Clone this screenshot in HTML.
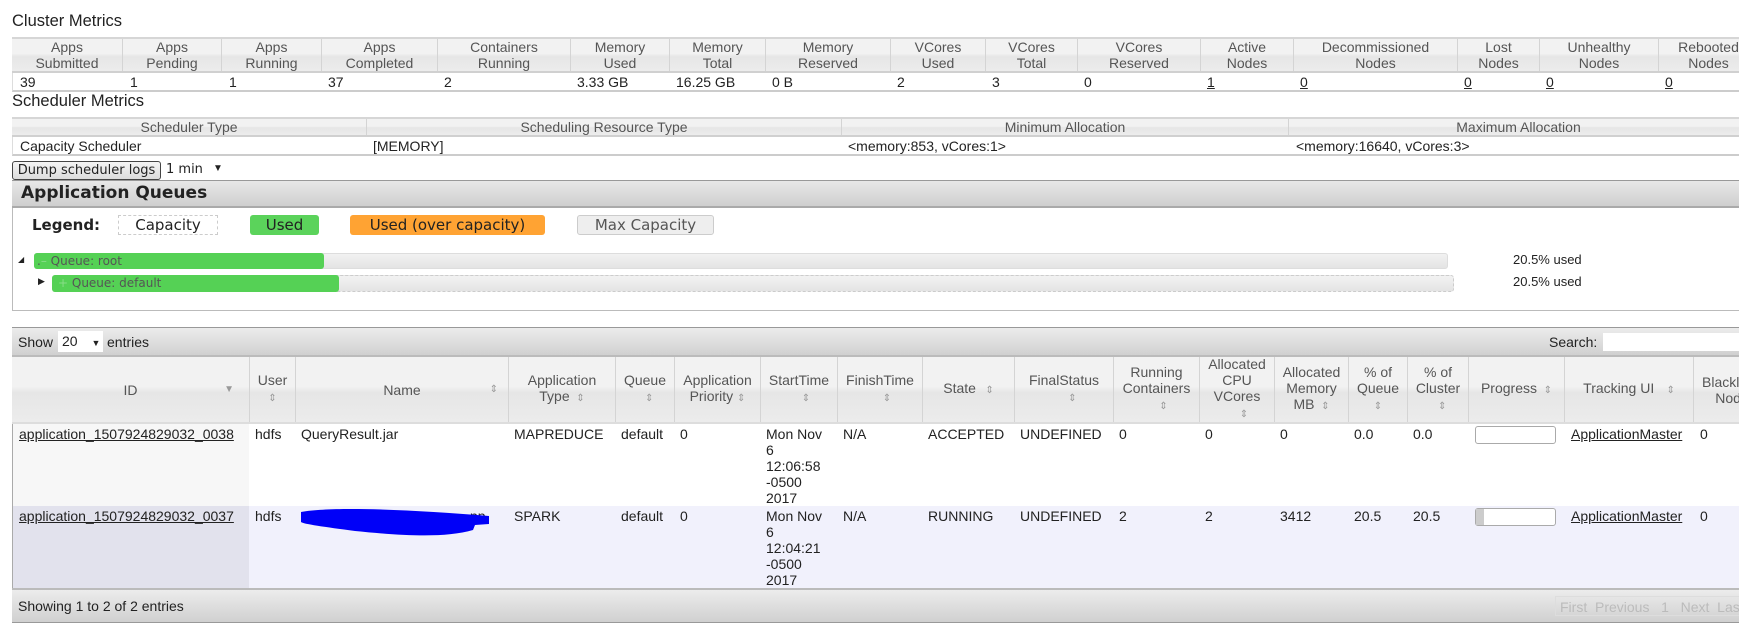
<!DOCTYPE html>
<html><head><meta charset="utf-8"><style>
*{box-sizing:border-box;margin:0;padding:0}
body{width:1739px;height:628px;overflow:hidden;background:#fff;font-family:"Liberation Sans",Arial,sans-serif;font-size:14px;color:#222;position:relative}
.a{position:absolute;white-space:nowrap}
.h{background:linear-gradient(#f2f2f2 0%,#f2f2f2 45%,#e6e6e6 55%,#ececec 100%);border-top:2px solid #d6d6d6;border-bottom:2px solid #d0d0d0}
.hc{position:absolute;top:0;bottom:0;border-left:1px solid #d4d4d4;color:#555;text-align:center;display:flex;align-items:center;justify-content:center;line-height:16px;font-size:14px}
.hc>div{text-align:center}
.u{text-decoration:underline}
.srt{color:#999;font-size:10px}
.dj{font-family:"DejaVu Sans",sans-serif}
</style></head><body>

<div class="a" style="left:12px;top:12px;font-size:16.5px">Cluster Metrics</div>
<div class="a h" style="left:12px;top:37px;width:1740px;height:36px">
 <div class="hc" style="left:0;width:110px;border-left:none"><div>Apps<br>Submitted</div></div>
 <div class="hc" style="left:110px;width:99px"><div>Apps<br>Pending</div></div>
 <div class="hc" style="left:209px;width:100px"><div>Apps<br>Running</div></div>
 <div class="hc" style="left:309px;width:116px"><div>Apps<br>Completed</div></div>
 <div class="hc" style="left:425px;width:133px"><div>Containers<br>Running</div></div>
 <div class="hc" style="left:558px;width:99px"><div>Memory<br>Used</div></div>
 <div class="hc" style="left:657px;width:96px"><div>Memory<br>Total</div></div>
 <div class="hc" style="left:753px;width:125px"><div>Memory<br>Reserved</div></div>
 <div class="hc" style="left:878px;width:95px"><div>VCores<br>Used</div></div>
 <div class="hc" style="left:973px;width:92px"><div>VCores<br>Total</div></div>
 <div class="hc" style="left:1065px;width:123px"><div>VCores<br>Reserved</div></div>
 <div class="hc" style="left:1188px;width:93px"><div>Active<br>Nodes</div></div>
 <div class="hc" style="left:1281px;width:164px"><div>Decommissioned<br>Nodes</div></div>
 <div class="hc" style="left:1445px;width:82px"><div>Lost<br>Nodes</div></div>
 <div class="hc" style="left:1527px;width:119px"><div>Unhealthy<br>Nodes</div></div>
 <div class="hc" style="left:1646px;width:100px"><div>Rebooted<br>Nodes</div></div>
</div>
<div class="a" style="left:12px;top:73px;width:1740px;height:19px;border-bottom:2px solid #ccc;border-left:1px solid #ddd"></div>
<div class="a" style="top:74px;left:20px">39</div><div class="a" style="top:74px;left:130px">1</div><div class="a" style="top:74px;left:229px">1</div><div class="a" style="top:74px;left:328px">37</div><div class="a" style="top:74px;left:444px">2</div><div class="a" style="top:74px;left:577px">3.33 GB</div><div class="a" style="top:74px;left:676px">16.25 GB</div><div class="a" style="top:74px;left:772px">0 B</div><div class="a" style="top:74px;left:897px">2</div><div class="a" style="top:74px;left:992px">3</div><div class="a" style="top:74px;left:1084px">0</div><div class="a u" style="top:74px;left:1207px">1</div><div class="a u" style="top:74px;left:1300px">0</div><div class="a u" style="top:74px;left:1464px">0</div><div class="a u" style="top:74px;left:1546px">0</div><div class="a u" style="top:74px;left:1665px">0</div>

<div class="a" style="left:12px;top:92px;font-size:16.5px">Scheduler Metrics</div>
<div class="a h" style="left:12px;top:117px;width:1740px;height:20px">
 <div class="hc" style="left:0;width:354px;border-left:none">Scheduler Type</div>
 <div class="hc" style="left:354px;width:475px">Scheduling Resource Type</div>
 <div class="hc" style="left:829px;width:447px">Minimum Allocation</div>
 <div class="hc" style="left:1276px;width:460px">Maximum Allocation</div>
</div>
<div class="a" style="left:12px;top:137px;width:1740px;height:19px;border-bottom:2px solid #ccc;border-left:1px solid #ddd"></div>
<div class="a" style="top:138px;left:20px">Capacity Scheduler</div><div class="a" style="top:138px;left:373px">[MEMORY]</div><div class="a" style="top:138px;left:848px">&lt;memory:853, vCores:1&gt;</div><div class="a" style="top:138px;left:1296px">&lt;memory:16640, vCores:3&gt;</div>

<div class="a dj" style="left:12px;top:161px;width:149px;height:19px;border:1px solid #444;border-radius:3px;background:linear-gradient(#f4f4f4,#dcdcdc);font-size:13px;line-height:17px;text-align:center">Dump scheduler logs</div>
<div class="a dj" style="left:166px;top:162px;font-size:13px">1 min</div>
<div class="a" style="left:213px;top:163px;font-size:10px">▼</div>

<div class="a" style="left:12px;top:180px;width:1740px;height:131px;border:1px solid #bbb;border-right:none"></div>
<div class="a" style="left:12px;top:180px;width:1740px;height:28px;background:linear-gradient(#e8e8e8,#cfcfcf);border-top:1px solid #999;border-bottom:2px solid #aaa"></div>
<div class="a dj" style="left:21px;top:183px;font-size:17px;font-weight:bold;color:#222">Application Queues</div>
<div class="a dj" style="left:32px;top:216px;font-size:15px;font-weight:bold">Legend:</div>
<div class="a dj" style="left:118px;top:215px;width:100px;height:20px;border:1px dashed #ccc;text-align:center;font-size:15px;line-height:18px">Capacity</div>
<div class="a dj" style="left:250px;top:215px;width:69px;height:20px;background:#5bd35b;border-radius:3px;text-align:center;font-size:15px;line-height:20px">Used</div>
<div class="a dj" style="left:350px;top:215px;width:195px;height:20px;background:#ffa333;border-radius:3px;text-align:center;font-size:15px;line-height:20px">Used (over capacity)</div>
<div class="a dj" style="left:577px;top:215px;width:137px;height:20px;background:#eee;border:1px solid #ccc;border-radius:3px;text-align:center;font-size:15px;line-height:18px;color:#555">Max Capacity</div>

<div class="a" style="left:18px;top:255px;font-size:8px">◢</div>
<div class="a" style="left:34px;top:253px;width:1414px;height:16px;background:linear-gradient(#f2f2f2,#e4e4e4);border:1px solid #ddd;border-radius:3px"></div>
<div class="a dj" style="left:34px;top:253px;width:290px;height:16px;background:#55d155;border-radius:3px;font-size:12px;line-height:16px;color:#555;padding-left:3px">.<span style="color:#8d8">–</span> Queue: root</div>
<div class="a" style="left:1513px;top:252px;font-size:13px" >20.5% used</div>
<div class="a" style="left:38px;top:276px;font-size:9px">▶</div>
<div class="a" style="left:52px;top:275px;width:1402px;height:17px;background:linear-gradient(#f2f2f2,#e4e4e4);border:1px dashed #ccc;border-radius:3px"></div>
<div class="a dj" style="left:52px;top:275px;width:287px;height:17px;background:#55d155;border-radius:3px;font-size:12px;line-height:17px;color:#555;padding-left:6px"><span style="color:#8d8">+</span> Queue: default</div>
<div class="a" style="left:1513px;top:274px;font-size:13px">20.5% used</div>

<div class="a" style="left:12px;top:327px;width:1740px;height:296px;border:1px solid #aaa;border-right:none;background:#fff"></div>
<div class="a" style="left:12px;top:327px;width:1740px;height:30px;background:linear-gradient(#ececec,#d0d0d0);border-top:1px solid #999;border-bottom:2px solid #bbb"></div>
<div class="a" style="left:18px;top:334px">Show</div>
<div class="a" style="left:58px;top:331px;width:45px;height:21px;background:#fff;padding:2px 4px">20 <span style="font-size:9px;margin-left:10px">▼</span></div>
<div class="a" style="left:107px;top:334px">entries</div>
<div class="a" style="left:1549px;top:334px">Search:</div>
<div class="a" style="left:1603px;top:333px;width:140px;height:18px;background:#fff"></div>

<div class="a h" style="left:12px;top:357px;width:1740px;height:67px;border-top:none;border-bottom:2px solid #ddd">
 <div class="hc" style="left:0;width:237px;border-left:none"><div>ID</div><span class="srt" style="position:absolute;right:15px">▼</span></div>
 <div class="hc" style="left:237px;width:46px"><div>User<br><span class="srt">⇕</span></div></div>
 <div class="hc" style="left:283px;width:213px"><div>Name</div><span class="srt" style="position:absolute;right:10px">⇕</span></div>
 <div class="hc" style="left:496px;width:107px"><div>Application<br>Type <span class="srt">&nbsp;⇕</span></div></div>
 <div class="hc" style="left:603px;width:59px"><div>Queue<br><span class="srt">&nbsp;&nbsp;&nbsp;⇕</span></div></div>
 <div class="hc" style="left:662px;width:86px"><div>Application<br>Priority <span class="srt">⇕</span></div></div>
 <div class="hc" style="left:748px;width:77px"><div>StartTime<br><span class="srt">&nbsp;&nbsp;&nbsp;&nbsp;&nbsp;⇕</span></div></div>
 <div class="hc" style="left:825px;width:85px"><div>FinishTime<br><span class="srt">&nbsp;&nbsp;&nbsp;&nbsp;&nbsp;⇕</span></div></div>
 <div class="hc" style="left:910px;width:92px"><div>State <span class="srt">&nbsp;&nbsp;⇕</span></div></div>
 <div class="hc" style="left:1002px;width:99px"><div>FinalStatus<br><span class="srt">&nbsp;&nbsp;&nbsp;&nbsp;&nbsp;&nbsp;⇕</span></div></div>
 <div class="hc" style="left:1101px;width:86px"><div>Running<br>Containers<br><span class="srt">&nbsp;&nbsp;&nbsp;&nbsp;&nbsp;⇕</span></div></div>
 <div class="hc" style="left:1187px;width:75px"><div>Allocated<br>CPU<br>VCores<br><span class="srt">&nbsp;&nbsp;&nbsp;&nbsp;&nbsp;⇕</span></div></div>
 <div class="hc" style="left:1262px;width:74px"><div>Allocated<br>Memory<br>MB <span class="srt">&nbsp;⇕</span></div></div>
 <div class="hc" style="left:1336px;width:59px"><div>% of<br>Queue<br><span class="srt">⇕</span></div></div>
 <div class="hc" style="left:1395px;width:61px"><div>% of<br>Cluster<br><span class="srt">&nbsp;&nbsp;&nbsp;⇕</span></div></div>
 <div class="hc" style="left:1456px;width:96px"><div>Progress <span class="srt">&nbsp;⇕</span></div></div>
 <div class="hc" style="left:1552px;width:129px"><div>Tracking UI <span class="srt">&nbsp;&nbsp;&nbsp;⇕</span></div></div>
 <div class="hc" style="left:1681px;width:60px;justify-content:flex-start;padding-left:8px"><div>Blacklisted<br>Nodes</div></div>
</div>

<div class="a" style="left:13px;top:424px;width:236px;height:82px;background:#f7f7f7"></div>
<div class="a" style="left:13px;top:506px;width:1730px;height:82px;background:#f1f1fc"></div>
<div class="a" style="left:13px;top:506px;width:236px;height:82px;background:#e2e2ed"></div>

<div class="a u" style="left:19px;top:426px">application_1507924829032_0038</div>
<div class="a" style="left:255px;top:426px">hdfs</div>
<div class="a" style="left:301px;top:426px">QueryResult.jar</div>
<div class="a" style="left:514px;top:426px">MAPREDUCE</div>
<div class="a" style="left:621px;top:426px">default</div>
<div class="a" style="left:680px;top:426px">0</div>
<div class="a" style="left:766px;top:426px;line-height:16px;white-space:normal;width:60px">Mon Nov 6 12:06:58 -0500 2017</div>
<div class="a" style="left:843px;top:426px">N/A</div>
<div class="a" style="left:928px;top:426px">ACCEPTED</div>
<div class="a" style="left:1020px;top:426px">UNDEFINED</div>
<div class="a" style="left:1119px;top:426px">0</div>
<div class="a" style="left:1205px;top:426px">0</div>
<div class="a" style="left:1280px;top:426px">0</div>
<div class="a" style="left:1354px;top:426px">0.0</div>
<div class="a" style="left:1413px;top:426px">0.0</div>
<div class="a" style="left:1475px;top:426px;width:81px;height:18px;border:1px solid #aaa;border-radius:3px;background:#fff"></div>
<div class="a u" style="left:1571px;top:426px">ApplicationMaster</div>
<div class="a" style="left:1700px;top:426px">0</div>

<div class="a u" style="left:19px;top:508px">application_1507924829032_0037</div>
<div class="a" style="left:255px;top:508px">hdfs</div>
<div class="a" style="left:470px;top:508px">pp</div>
<svg class="a" style="left:295px;top:508px" width="200" height="30"><path d="M6 4 C40 -2 120 2 194 8 L194 16 L180 17 L178 22 C150 30 110 28 60 23 C30 19 8 16 6 14 Z" fill="#0000f8"/></svg>
<div class="a" style="left:514px;top:508px">SPARK</div>
<div class="a" style="left:621px;top:508px">default</div>
<div class="a" style="left:680px;top:508px">0</div>
<div class="a" style="left:766px;top:508px;line-height:16px;white-space:normal;width:60px">Mon Nov 6 12:04:21 -0500 2017</div>
<div class="a" style="left:843px;top:508px">N/A</div>
<div class="a" style="left:928px;top:508px">RUNNING</div>
<div class="a" style="left:1020px;top:508px">UNDEFINED</div>
<div class="a" style="left:1119px;top:508px">2</div>
<div class="a" style="left:1205px;top:508px">2</div>
<div class="a" style="left:1280px;top:508px">3412</div>
<div class="a" style="left:1354px;top:508px">20.5</div>
<div class="a" style="left:1413px;top:508px">20.5</div>
<div class="a" style="left:1475px;top:508px;width:81px;height:18px;border:1px solid #aaa;border-radius:3px;background:#fff"><div style="width:8px;height:100%;background:#ccc"></div></div>
<div class="a u" style="left:1571px;top:508px">ApplicationMaster</div>
<div class="a" style="left:1700px;top:508px">0</div>

<div class="a" style="left:12px;top:588px;width:1740px;height:35px;background:linear-gradient(#ececec,#d0d0d0);border-top:2px solid #bbb;border-bottom:1px solid #999"></div>
<div class="a" style="left:18px;top:598px">Showing 1 to 2 of 2 entries</div>
<div class="a" style="left:1555px;top:596px;height:20px;color:#bbb;line-height:20px;border:1px solid #ddd;padding:0 4px">First &nbsp;Previous &nbsp; 1 &nbsp; Next &nbsp;Last</div>
</body></html>
